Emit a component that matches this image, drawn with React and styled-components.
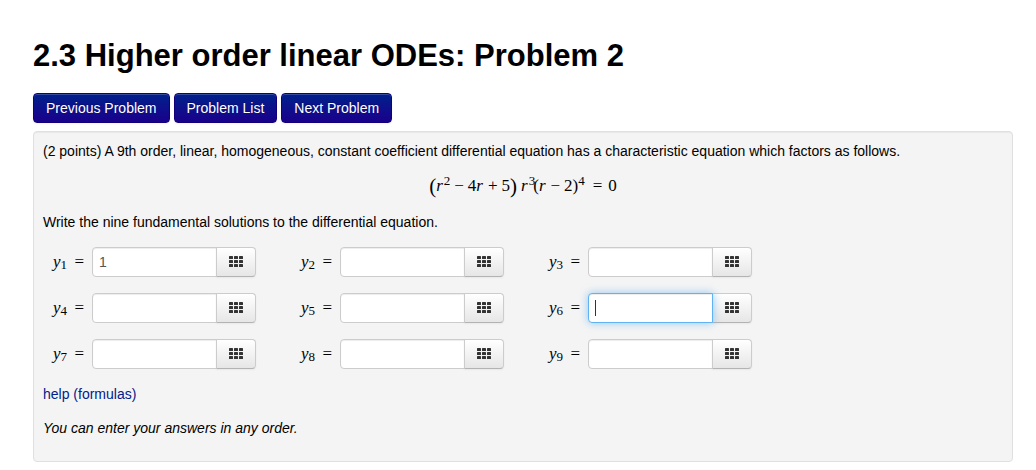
import React from 'react';
import styled, { createGlobalStyle, css } from 'styled-components';

const GlobalStyle = createGlobalStyle`
  *, *::before, *::after {
    box-sizing: border-box;
  }
  body {
    margin: 0;
    background: #fff;
    color: #000;
    font-family: 'Liberation Sans', 'Helvetica Neue', Helvetica, Arial, sans-serif;
    font-size: 14px;
    line-height: 20px;
  }
`;

const Page = styled.main`
  padding: 35px 23px 8px 33px;
`;

const Title = styled.h1`
  margin: 0 0 16px;
  font-size: 31px;
  line-height: 42px;
  font-weight: bold;
`;

const Nav = styled.nav`
  display: flex;
  gap: 4px;
  margin-bottom: 8px;
`;

const NavButton = styled.button`
  height: 30px;
  padding: 0 12px;
  border: 1px solid #12007a;
  border-radius: 4px;
  background: linear-gradient(to bottom, #00218b, #1a008b);
  box-shadow: inset 0 1px 0 rgba(255, 255, 255, 0.2),
    0 1px 2px rgba(0, 0, 0, 0.05);
  color: #fff;
  font: inherit;
  text-shadow: 0 -1px 0 rgba(0, 0, 0, 0.25);
  white-space: nowrap;
  cursor: pointer;
`;

const Well = styled.section`
  padding: 9px 9px 23px;
  border: 1px solid #e0e0e0;
  border-radius: 4px;
  background: #f4f4f4;
  box-shadow: inset 0 1px 1px rgba(0, 0, 0, 0.05);
`;

const Text = styled.p`
  margin: 0;
`;

const Note = styled.p`
  margin: 14px 0 0;
  font-style: italic;
`;

const HelpLink = styled.a`
  color: #00218b;
  text-decoration: none;
  &:hover {
    text-decoration: underline;
  }
`;

const mathFont = css`
  font-family: 'Liberation Serif', 'Times New Roman', serif;
  font-size: 17px;
  line-height: 22px;
  white-space: nowrap;
`;

const Equation = styled.div`
  ${mathFont}
  display: flex;
  justify-content: center;
  margin: 14px 0 15px;
`;

const Var = styled.i`
  padding-right: 1px;
`;

const Op = styled.span`
  padding: 0 4px;
`;

const Rel = styled.span`
  padding: 0 6px 0 8px;
`;

const BigParen = styled.span`
  font-size: 21px;
`;

const Sup = styled.span`
  align-self: flex-start;
  font-size: 13px;
  line-height: 12px;
`;

// the r^3 exponent runs into the paren that follows it
const TightSup = styled(Sup)`
  margin-right: -2px;
`;

const Space = styled.span`
  width: 4px;
`;

const Answers = styled.div`
  display: grid;
  grid-template-columns: repeat(3, 248px);
  row-gap: 16px;
  margin: 15px 0;
  padding-left: 10px;
`;

const Answer = styled.div`
  display: flex;
  align-items: center;
`;

const Label = styled.label`
  ${mathFont}
  display: flex;
  width: 39px;
`;

const Sub = styled.span`
  height: 22px;
  font-size: 13px;
  line-height: 28px;
`;

const Equals = styled.span`
  margin-left: auto;
  padding-right: 8px;
`;

const Field = styled.div`
  position: relative;
  display: flex;
`;

const Input = styled.input`
  width: 125px;
  height: 30px;
  padding: 4px 6px;
  border: 1px solid #ccc;
  border-radius: 4px 0 0 4px;
  background: #fff;
  box-shadow: inset 0 1px 1px rgba(0, 0, 0, 0.075);
  color: #555;
  font: inherit;
  outline: 0;
  ${({ $active }) =>
    $active &&
    css`
      z-index: 1;
      border-color: #5fb3f3;
      box-shadow: inset 0 1px 1px rgba(0, 0, 0, 0.075),
        0 0 8px rgba(82, 168, 236, 0.6);
      caret-color: transparent;
    `}
`;

const Caret = styled.span`
  position: absolute;
  z-index: 2;
  top: 7px;
  left: 7px;
  width: 1px;
  height: 16px;
  background: #333;
  pointer-events: none;
`;

const KeypadButton = styled.button`
  display: flex;
  align-items: center;
  justify-content: center;
  width: 40px;
  height: 30px;
  margin-left: -1px;
  padding: 0;
  border: 1px solid #ccc;
  border-bottom-color: #b3b3b3;
  border-radius: 0 4px 4px 0;
  background: linear-gradient(to bottom, #fff, #e6e6e6);
  box-shadow: inset 0 1px 0 rgba(255, 255, 255, 0.2),
    0 1px 2px rgba(0, 0, 0, 0.05);
  cursor: pointer;
`;

const KeypadIcon = () => (
  <svg width="16" height="12" viewBox="0 0 16 12" fill="#333" aria-hidden="true">
    {[0, 4, 8].map((y) =>
      [1, 6, 11].map((x) => (
        <rect key={`${x}-${y}`} x={x} y={y} width="4" height="3" rx="0.6" />
      )),
    )}
  </svg>
);

const answers = ['1', '', '', '', '', '', '', '', ''];
const ACTIVE = 6;

const AnswerField = ({ index, value }) => {
  const id = `answer-${index}`;
  const active = index === ACTIVE;
  return (
    <Answer>
      <Label htmlFor={id}>
        <i>y</i>
        <Sub>{index}</Sub>
        <Equals>=</Equals>
      </Label>
      <Field>
        <Input id={id} type="text" defaultValue={value} $active={active} autoComplete="off" />
        {active && <Caret />}
        <KeypadButton type="button" aria-label={`Equation editor for answer ${index}`}>
          <KeypadIcon />
        </KeypadButton>
      </Field>
    </Answer>
  );
};

const App = () => (
  <>
    <GlobalStyle />
    <Page>
      <Title>2.3 Higher order linear ODEs: Problem 2</Title>
      <Nav>
        <NavButton type="button">Previous Problem</NavButton>
        <NavButton type="button">Problem List</NavButton>
        <NavButton type="button">Next Problem</NavButton>
      </Nav>
      <Well>
        <Text>
          (2 points) A 9th order, linear, homogeneous, constant coefficient
          differential equation has a characteristic equation which factors as
          follows.
        </Text>
        <Equation>
          <BigParen>(</BigParen>
          <Var>r</Var>
          <Sup>2</Sup>
          <Op>−</Op>
          <span>4</span>
          <Var>r</Var>
          <Op>+</Op>
          <span>5</span>
          <BigParen>)</BigParen>
          <Space />
          <Var>r</Var>
          <TightSup>3</TightSup>
          <span>(</span>
          <Var>r</Var>
          <Op>−</Op>
          <span>2</span>
          <span>)</span>
          <Sup>4</Sup>
          <Rel>=</Rel>
          <span>0</span>
        </Equation>
        <Text>Write the nine fundamental solutions to the differential equation.</Text>
        <Answers>
          {answers.map((value, i) => (
            <AnswerField key={i} index={i + 1} value={value} />
          ))}
        </Answers>
        <HelpLink href="#formulas">help (formulas)</HelpLink>
        <Note>You can enter your answers in any order.</Note>
      </Well>
    </Page>
  </>
);

export default App;
